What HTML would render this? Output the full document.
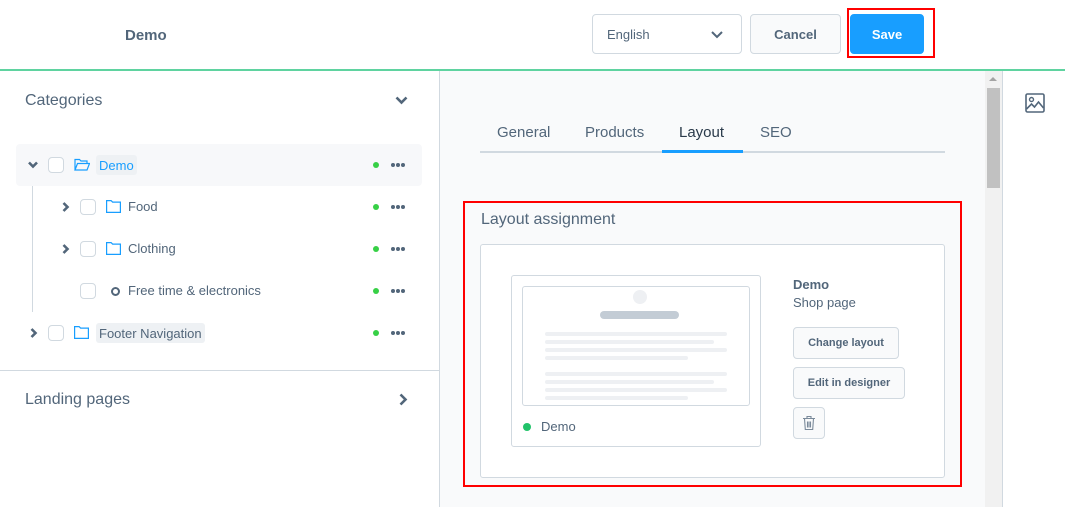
<!DOCTYPE html>
<html><head><meta charset="utf-8"><style>
*{box-sizing:border-box;margin:0;padding:0}
body{width:1065px;height:507px;overflow:hidden;font-family:"Liberation Sans",sans-serif;background:#fff;position:relative;color:#52667a}
.abs{position:absolute}
.hdr{left:0;top:0;width:1065px;height:71px;background:#fff;border-bottom:2px solid #5fd3a0}
.btn{position:absolute;border:1px solid #d1d9e0;border-radius:4px;background:#f9fafb;font-size:13px;font-weight:bold;color:#52667a;display:flex;align-items:center;justify-content:center}
.row{position:absolute;left:16px;width:406px;height:42px;font-size:13px;color:#52667a}
.cb{position:absolute;width:16px;height:16px;border:1px solid #d1d9e0;border-radius:4px;background:#fff;top:13px}
.dot{position:absolute;left:357px;top:18px;width:6px;height:6px;border-radius:50%;background:#37d046}
.more{position:absolute;left:375px;top:19px;width:4px;height:4px;border-radius:50%;background:#52667a;box-shadow:5px 0 0 #52667a,10px 0 0 #52667a}
.chev{position:absolute;top:13px}
.lbl{position:absolute;top:13px}
.line{position:absolute;height:4px;border-radius:2px;background:#eef0f3;left:22px}
</style></head><body>
<div class="abs hdr"></div>
<div class="abs" style="left:125px;top:27px;font-size:15px;font-weight:bold;color:#52667a">Demo</div>
<div class="btn" style="left:592px;top:14px;width:150px;height:40px;background:#fff;justify-content:flex-start;padding-left:14px;font-weight:normal">English
<svg style="position:absolute;right:18px;top:16px" width="12" height="8" viewBox="0 0 12 8"><path d="M1 1l5 5 5-5" stroke="#52667a" stroke-width="2" fill="none"/></svg></div>
<div class="btn" style="left:750px;top:14px;width:91px;height:40px">Cancel</div>
<div class="abs" style="left:847px;top:8px;width:88px;height:50px;border:2px solid #f00"></div>
<div class="btn" style="left:850px;top:14px;width:74px;height:40px;background:#189eff;border-color:#189eff;color:#fff">Save</div>

<!-- left -->
<div class="abs" style="left:439px;top:71px;width:1px;height:436px;background:#d1d9e0"></div>
<div class="abs" style="left:25px;top:92px;font-size:16px;color:#52667a">Categories</div>
<svg class="abs" style="left:395px;top:96px" width="13" height="9" viewBox="0 0 13 9"><path d="M1.5 1.5l5 5 5-5" stroke="#52667a" stroke-width="2.6" fill="none"/></svg>
<div class="abs" style="left:16px;top:144px;width:406px;height:42px;background:#f7f8fa;border-radius:4px"></div>
<div class="abs" style="left:32px;top:186px;width:1px;height:126px;background:#d1d9e0"></div>

<div class="row" style="top:144px">
<svg class="chev" style="left:12px;top:17px" width="10" height="8" viewBox="0 0 10 8"><path d="M1 1.5l4 4 4-4" stroke="#52667a" stroke-width="2.6" fill="none"/></svg>
<div class="cb" style="left:32px"></div>
<svg class="abs" style="left:58px;top:14px" width="16" height="13" viewBox="0 0 16 13"><path d="M1 12V1.5h4.5l1.5 1.5h6v2.5M1 12l2.5-6.5h12L13 12z" stroke="#189eff" stroke-width="1.2" fill="none"/></svg>
<div class="abs" style="left:80px;top:11px;height:20px;padding:3px 3px;background:#eef1f4;border-radius:3px;color:#189eff">Demo</div>
<div class="dot"></div><div class="more"></div></div>

<div class="row" style="top:186px">
<svg class="chev" style="left:46px;top:16px" width="8" height="10" viewBox="0 0 8 10"><path d="M1.5 1l4 4-4 4" stroke="#52667a" stroke-width="2.6" fill="none"/></svg>
<div class="cb" style="left:64px"></div>
<svg class="abs" style="left:90px;top:14px" width="15" height="13" viewBox="0 0 15 13"><path d="M.6 12.4V.6h4.5l1.5 1.5h7.8v10.3z" stroke="#189eff" stroke-width="1.2" fill="none"/></svg>
<div class="lbl" style="left:112px">Food</div>
<div class="dot"></div><div class="more"></div></div>

<div class="row" style="top:228px">
<svg class="chev" style="left:46px;top:16px" width="8" height="10" viewBox="0 0 8 10"><path d="M1.5 1l4 4-4 4" stroke="#52667a" stroke-width="2.6" fill="none"/></svg>
<div class="cb" style="left:64px"></div>
<svg class="abs" style="left:90px;top:14px" width="15" height="13" viewBox="0 0 15 13"><path d="M.6 12.4V.6h4.5l1.5 1.5h7.8v10.3z" stroke="#189eff" stroke-width="1.2" fill="none"/></svg>
<div class="lbl" style="left:112px">Clothing</div>
<div class="dot"></div><div class="more"></div></div>

<div class="row" style="top:270px">
<div class="cb" style="left:64px"></div>
<div class="abs" style="left:95px;top:17px;width:9px;height:9px;border:2px solid #52667a;border-radius:50%"></div>
<div class="lbl" style="left:112px">Free time &amp; electronics</div>
<div class="dot"></div><div class="more"></div></div>

<div class="row" style="top:312px">
<svg class="chev" style="left:14px;top:16px" width="8" height="10" viewBox="0 0 8 10"><path d="M1.5 1l4 4-4 4" stroke="#52667a" stroke-width="2.6" fill="none"/></svg>
<div class="cb" style="left:32px"></div>
<svg class="abs" style="left:58px;top:14px" width="15" height="13" viewBox="0 0 15 13"><path d="M.6 12.4V.6h4.5l1.5 1.5h7.8v10.3z" stroke="#189eff" stroke-width="1.2" fill="none"/></svg>
<div class="abs" style="left:80px;top:11px;height:20px;padding:3px 3px;background:#eef1f4;border-radius:3px">Footer Navigation</div>
<div class="dot"></div><div class="more"></div></div>

<div class="abs" style="left:0;top:370px;width:439px;height:1px;background:#d1d9e0"></div>
<div class="abs" style="left:25px;top:391px;font-size:16px">Landing pages</div>
<svg class="abs" style="left:399px;top:393px" width="9" height="13" viewBox="0 0 9 13"><path d="M1.5 1.5l5 5-5 5" stroke="#52667a" stroke-width="2.6" fill="none"/></svg>

<!-- middle -->
<div class="abs" style="left:440px;top:71px;width:545px;height:436px;background:#f9fafb"></div>
<div class="abs" style="left:480px;top:151px;width:465px;height:2px;background:#d1d9e0"></div>
<div class="abs" style="left:662px;top:150px;width:81px;height:3px;background:#189eff"></div>
<div class="abs" style="left:497px;top:124px;font-size:15px;color:#52667a">General</div>
<div class="abs" style="left:585px;top:124px;font-size:15px;color:#52667a">Products</div>
<div class="abs" style="left:679px;top:124px;font-size:15px;color:#2a3a4a">Layout</div>
<div class="abs" style="left:760px;top:124px;font-size:15px;color:#52667a">SEO</div>

<div class="abs" style="left:463px;top:201px;width:499px;height:286px;border:2px solid #f00"></div>
<div class="abs" style="left:481px;top:211px;font-size:16px;color:#52667a">Layout assignment</div>
<div class="abs" style="left:480px;top:244px;width:465px;height:234px;background:#fff;border:1px solid #d1d9e0;border-radius:3px">
 <div class="abs" style="left:30px;top:30px;width:250px;height:172px;border:1px solid #d1d9e0;border-radius:3px">
  <div class="abs" style="left:10px;top:10px;width:228px;height:120px;border:1px solid #d1d9e0;border-radius:3px">
   <div class="abs" style="left:110px;top:3px;width:14px;height:14px;border-radius:50%;background:#eef0f3"></div>
   <div class="abs" style="left:77px;top:24px;width:79px;height:8px;border-radius:4px;background:#c3ccd5"></div>
   <div class="line" style="top:45px;width:182px"></div>
   <div class="line" style="top:53px;width:169px"></div>
   <div class="line" style="top:61px;width:182px"></div>
   <div class="line" style="top:69px;width:143px"></div>
   <div class="line" style="top:85px;width:182px"></div>
   <div class="line" style="top:93px;width:169px"></div>
   <div class="line" style="top:101px;width:182px"></div>
   <div class="line" style="top:109px;width:143px"></div>
  </div>
  <div class="abs" style="left:11px;top:147px;width:8px;height:8px;border-radius:50%;background:#22c36a"></div>
  <div class="abs" style="left:29px;top:143px;font-size:13px">Demo</div>
 </div>
 <div class="abs" style="left:312px;top:32px;font-size:13px;font-weight:bold">Demo</div>
 <div class="abs" style="left:312px;top:50px;font-size:13px">Shop page</div>
 <div class="btn" style="left:312px;top:82px;width:106px;height:32px;font-size:11px">Change layout</div>
 <div class="btn" style="left:312px;top:122px;width:112px;height:32px;font-size:11px">Edit in designer</div>
 <div class="btn" style="left:312px;top:162px;width:32px;height:32px">
  <svg width="14" height="16" viewBox="0 0 14 16"><path d="M1 3.5h12M5 3.5V1.5h4v2M2.5 3.5l.8 11h7.4l.8-11M5.5 6.5v6M7 6.5v6M8.5 6.5v6" stroke="#7a8a9a" stroke-width="1.1" fill="none"/></svg>
 </div>
</div>

<!-- scrollbar -->
<div class="abs" style="left:985px;top:71px;width:17px;height:436px;background:#f1f1f1"></div>
<div class="abs" style="left:987px;top:88px;width:13px;height:100px;background:#c1c1c1"></div>
<svg class="abs" style="left:989px;top:76px" width="9" height="6" viewBox="0 0 9 6"><path d="M0 5h8L4 1z" fill="#a3a3a3"/></svg>
<div class="abs" style="left:1002px;top:71px;width:1px;height:436px;background:#d1d9e0"></div>
<svg class="abs" style="left:1025px;top:93px" width="20" height="20" viewBox="0 0 20 20"><rect x="1" y="1" width="18" height="18" rx="1.5" stroke="#52667a" stroke-width="1.6" fill="none"/><circle cx="6.5" cy="6.5" r="2" stroke="#52667a" stroke-width="1.4" fill="none"/><path d="M1.5 16l5-5 3 3 4-5 5 6" stroke="#52667a" stroke-width="1.6" fill="none"/></svg>
</body></html>
